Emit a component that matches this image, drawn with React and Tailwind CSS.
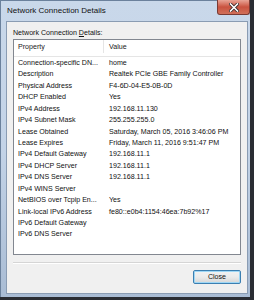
import React from "react";

const rows = [
  ["Connection-specific DN...", "home"],
  ["Description", "Realtek PCIe GBE Family Controller"],
  ["Physical Address", "F4-6D-04-E5-0B-0D"],
  ["DHCP Enabled", "Yes"],
  ["IPv4 Address", "192.168.11.130"],
  ["IPv4 Subnet Mask", "255.255.255.0"],
  ["Lease Obtained", "Saturday, March 05, 2016 3:46:06 PM"],
  ["Lease Expires", "Friday, March 11, 2016 9:51:47 PM"],
  ["IPv4 Default Gateway", "192.168.11.1"],
  ["IPv4 DHCP Server", "192.168.11.1"],
  ["IPv4 DNS Server", "192.168.11.1"],
  ["IPv4 WINS Server", ""],
  ["NetBIOS over Tcpip En...", "Yes"],
  ["Link-local IPv6 Address", "fe80::e0b4:1154:46ea:7b92%17"],
  ["IPv6 Default Gateway", ""],
  ["IPv6 DNS Server", ""],
];

export default function App() {
  return (
    <div
      className="relative w-[254px] h-[300px] overflow-hidden bg-[#2a2d33]"
      style={{ fontFamily: '"Liberation Sans", Arial, sans-serif' }}
    >
      <div className="absolute left-0 top-0 w-[250px] h-[297px] bg-gradient-to-b from-[#c9d8ea] via-[#c3d3e7] to-[#a9bcd4] border border-[#6b819c] border-b-0 border-r-0">
        {/* Title bar */}
        <div className="h-[20px] pl-[6px] flex items-center text-[8px] text-[#111]">
          Network Connection Details
        </div>
        {/* Close button */}
        <div className="absolute left-[216px] top-[-1px] w-[33px] h-[15px] rounded-b-[3px] border border-[#7a3a33] border-t-0 bg-gradient-to-b from-[#e8a496] via-[#c9523f] to-[#d0705a] flex items-center justify-center">
          <svg width="10" height="9" viewBox="0 0 10 9">
            <path d="M1.5 1 L8.5 8 M8.5 1 L1.5 8" stroke="#3a2a2a" strokeWidth="3.2" strokeLinecap="square" />
            <path d="M1.5 1 L8.5 8 M8.5 1 L1.5 8" stroke="#ffffff" strokeWidth="1.6" strokeLinecap="square" />
          </svg>
        </div>
        {/* Client area */}
        <div className="ml-[5px] w-[242px] h-[273px] bg-[#f0f0f0] border border-[#8a9cb3] px-[6px] pt-[6px] pb-[8px] flex flex-col">
          <div className="h-[11px] leading-[11px] text-[7.1px] text-[#111]">
            Network Connection <span className="underline">D</span>etails:
          </div>
          <div className="h-[216px] bg-white border border-[#828790] flex flex-col overflow-hidden">
            <div className="h-[17px] flex items-end pb-[3px] border-b border-[#e5e5e5] text-[7.1px] text-[#222]">
              <div className="w-[90px] pl-[4px] border-r border-[#e5e5e5] h-full flex items-end">Property</div>
              <div className="pl-[5px]">Value</div>
            </div>
            <div className="flex flex-col pt-[0.5px]">
              {rows.map(([k, v], i) => (
                <div key={i} className="h-[11.45px] flex items-center text-[7.1px] text-[#111] whitespace-nowrap">
                  <div className="w-[90px] pl-[4px] overflow-hidden">{k}</div>
                  <div className="pl-[5px]">{v}</div>
                </div>
              ))}
            </div>
          </div>
          <div className="mt-[7px] h-[2px] border-t border-[#d5d5d5] border-b border-b-white" />
          <div className="mt-[6px] flex justify-end">
            <div className="w-[48px] h-[14px] rounded-[2px] border border-[#3c7fb1] bg-gradient-to-b from-[#f2f2f2] via-[#ebebeb] to-[#d6d6d6] shadow-[inset_0_0_0_1px_#9fd7f5] flex items-center justify-center text-[7.1px] text-[#111]">
              Close
            </div>
          </div>
        </div>
      </div>
    </div>
  );
}
